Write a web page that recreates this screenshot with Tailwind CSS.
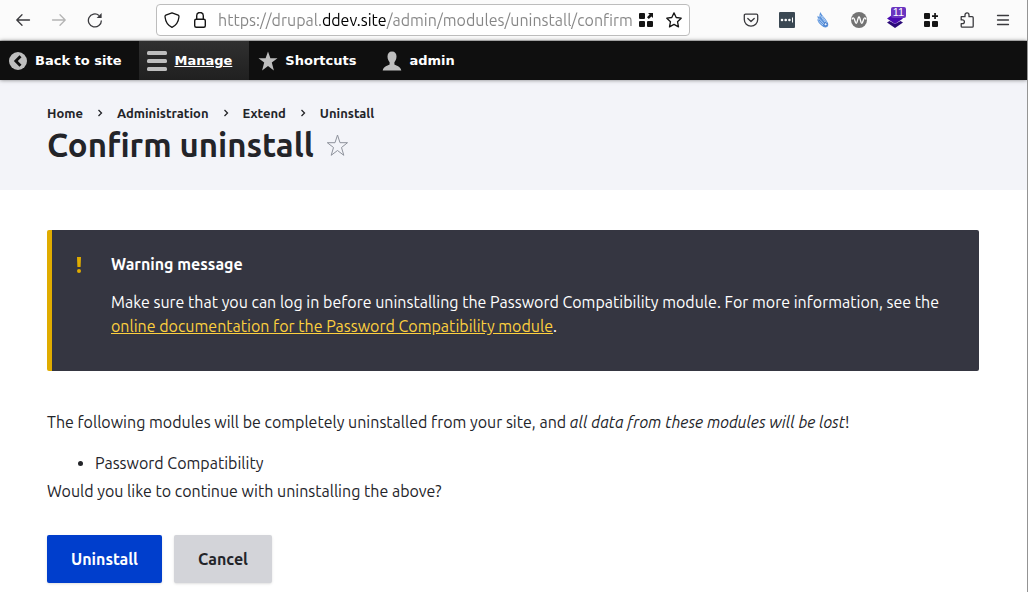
<!DOCTYPE html>
<html lang="en">
<head>
  <meta charset="UTF-8">
  <meta name="viewport" content="width=device-width, initial-scale=1.0">
  <title>Confirm uninstall</title>
  <script src="https://cdn.jsdelivr.net/npm/@tailwindcss/browser@4"></script>
</head>
<body class="min-h-screen border-r border-[#949494] bg-white font-['Ubuntu','Noto_Sans',sans-serif] text-base text-[#232429]">

  <!-- Browser bar -->
  <div class="flex h-[41px] items-center justify-between border-b border-[#cccccc] bg-[#fbfbfb] pl-[15px] pr-4 text-[#3a3a3e]">
    <div class="flex gap-5">
      <button aria-label="Back"><svg class="size-4" viewBox="0 0 16 16" fill="none" stroke="currentColor" stroke-width="1.3" stroke-linecap="round" stroke-linejoin="round"><path d="M14.500 8H2M7 2.800L1.800 8L7 13.200"/></svg></button>
      <button aria-label="Forward" class="text-[#b4b4b4]"><svg class="size-4" viewBox="0 0 16 16" fill="none" stroke="currentColor" stroke-width="1.3" stroke-linecap="round" stroke-linejoin="round"><path d="M1.500 8H14M9 2.800L14.200 8L9 13.200"/></svg></button>
      <button aria-label="Reload"><svg class="size-4" viewBox="0 0 16 16" fill="none" stroke="currentColor" stroke-width="1.3"><path d="M14.400 8.500A6.500 6.500 0 1 1 12 3.400"/><path d="M14.600 1V6H9.600z" fill="currentColor" stroke="none"/></svg></button>
    </div>

    <div class="flex h-8 w-[534px] items-center rounded border border-[#bdbdbd] bg-white px-[7px] text-[#151515]">
      <svg class="size-4 shrink-0" viewBox="0 0 16 16" fill="none" stroke="currentColor" stroke-width="1.3" stroke-linejoin="round"><path d="M8 .8L14.200 3.100Q15.200 3.500 14.900 5.200C14.400 10 12 13.400 8 15.300C4 13.400 1.600 10 1.100 5.200Q.8 3.500 1.800 3.100z"/></svg>
      <svg class="ml-3 size-4 shrink-0" viewBox="0 0 16 16" fill="none" stroke="currentColor" stroke-width="1.4"><rect x="2.700" y="7.200" width="10.600" height="8" rx="1.500"/><path d="M4.700 7V3.800a3.300 3.300 0 0 1 6.600 0V7"/></svg>
      <!-- the gradient darkens the domain part of the address -->
      <input type="text" aria-label="Address" value="https://drupal.ddev.site/admin/modules/uninstall/confirm" class="ml-2.5 min-w-0 flex-1 bg-[linear-gradient(to_right,#858585_104px,#000_104px,#000_168px,#858585_168px)] bg-clip-text text-base text-transparent outline-none">
      <button aria-label="Open in container"><svg class="size-4" viewBox="0 0 16 16" fill="currentColor"><rect x="1" y="1" width="6" height="6" rx="1"/><rect x="1" y="9" width="6" height="6" rx="1"/><rect x="9" y="9" width="6" height="6" rx="1"/><path d="M10 1h5v5l-1.600-1.600-2.600 2.600-1.800-1.800 2.600-2.600z"/></svg></button>
      <button aria-label="Bookmark this page" class="ml-3"><svg class="size-4" viewBox="0 0 16 16" fill="none" stroke="currentColor" stroke-width="1.3" stroke-linejoin="round"><path d="M8 .9L10.200 5.500L15.200 6.200L11.500 9.700L12.500 14.900L8 12.400L3.500 14.900L4.500 9.700L.8 6.200L5.800 5.500z"/></svg></button>
    </div>

    <div class="flex items-center gap-5">
      <button aria-label="Save to Pocket"><svg class="size-4" viewBox="0 0 16 16" fill="none" stroke="currentColor" stroke-width="1.3" stroke-linecap="round" stroke-linejoin="round"><path d="M2.500 2.200H13.500Q14.700 2.200 14.700 3.400V7.500A6.700 6.700 0 0 1 1.300 7.500V3.400Q1.300 2.200 2.500 2.200z"/><path d="M4.800 6.500L8 9.500L11.200 6.500"/></svg></button>
      <button aria-label="Password manager"><svg class="size-4" viewBox="0 0 16 16"><rect width="16" height="16" rx="1" fill="#3b4853"/><g fill="#fff"><circle cx="3" cy="8" r="1.300"/><circle cx="6.700" cy="8" r="1.300"/><circle cx="10.400" cy="8" r="1.300"/><rect x="13" y="5.500" width="1" height="5"/></g></svg></button>
      <button aria-label="Feather"><svg class="size-4" viewBox="0 0 16 16"><path d="M5.500 0C6.500 3 9.500 5.500 11.500 8.500Q14.500 12.500 12.500 14.800Q9.500 16.500 6.500 13.500C4 11.500 2.500 9.500 2.200 7L4 8.500Q2 5.500 2.700 3.800L4.500 5.500Q4 2.500 5.500 0z" fill="#5b93dc"/><path d="M5 3L10 10M3.500 6L9 12M3.500 9L8 13M7 4L12 11" fill="none" stroke="#cfe2fa" stroke-width=".7"/><circle cx="10.600" cy="12.300" r="1.500" fill="#e8f1fd" stroke="#2965bd" stroke-width=".8"/></svg></button>
      <button aria-label="Web archive"><svg class="size-4" viewBox="0 0 16 16"><circle cx="8" cy="8" r="8" fill="#737373"/><path d="M1 7.500Q2.200 4.500 3.300 7L4.500 10.500Q5.200 12 5.900 10.500L7.200 6Q8 4 8.800 6L10.100 10.500Q10.800 12 11.500 10.500L12.700 7Q13.800 4.500 15 7.500" fill="none" stroke="#fff" stroke-width="1.3"/></svg></button>
      <button aria-label="Layers, 11 items" class="relative">
        <svg class="size-4" viewBox="0 0 16 16"><path d="M0 10.500L2.500 9L8 12L13.500 9L16 10.500L8 16z" fill="#2b0a78"/><path d="M0 6.500L8 1L16 6.500L8 12z" fill="#4a0cb0"/></svg>
        <span class="absolute -right-[3px] -top-[5px] h-[11px] w-[15px] rounded-[2px] bg-[#6a35c0] text-center font-['Liberation_Sans',sans-serif] text-[11px] leading-[11px] text-white">11</span>
      </button>
      <button aria-label="Add widget"><svg class="size-4" viewBox="0 0 16 16" fill="#151515"><rect x="1" y="1" width="6" height="6" rx="1"/><rect x="1" y="9" width="6" height="6" rx="1"/><rect x="9" y="9" width="6" height="6" rx="1"/><path d="M11.200 1h1.700v2.200H15v1.700h-2.100V7h-1.700V4.900H9V3.200h2.200z"/></svg></button>
      <button aria-label="Extensions"><svg class="size-4" viewBox="0 0 16 16" fill="none" stroke="currentColor" stroke-width="1.3" stroke-linejoin="round"><path d="M2.200 4.700H6V2.900a2 2 0 0 1 4 0V4.700H13.200Q14.200 4.700 14.200 5.700V14.200Q14.200 15.200 13.200 15.200H3.200Q2.200 15.200 2.200 14.200V11.700H3.500a1.900 1.900 0 0 0 0-3.800H2.200z"/></svg></button>
      <button aria-label="Menu"><svg class="size-4" viewBox="0 0 16 16" fill="none" stroke="currentColor" stroke-width="1.3" stroke-linecap="round"><path d="M2.500 3.500H13.500M2.500 8H13.500M2.500 12.500H13.500"/></svg></button>
    </div>
  </div>

  <!-- Admin toolbar -->
  <nav class="relative flex h-[39px] items-stretch bg-[#0f0f0f] font-['DejaVu_Sans',sans-serif] text-[13px] font-bold text-white shadow-[0_0_4px_rgba(0,0,0,0.5)]">
    <a href="#" class="flex items-center gap-[7px] pl-2 pr-[18px]">
      <svg class="size-5" viewBox="0 0 20 20"><circle cx="10" cy="10" r="9" fill="#bebebe"/><path d="M12.500 5.200L7.800 10L12.500 14.800" fill="none" stroke="#0f0f0f" stroke-width="2.800"/></svg>
      Back to site
    </a>
    <a href="#" class="flex items-center gap-[7px] bg-linear-to-b from-[#303030] to-[#202020] pl-2 pr-[17px]">
      <svg class="size-5" viewBox="0 0 20 20" fill="#bebebe"><rect y="0" width="20" height="4" rx="1.500"/><rect y="8" width="20" height="4" rx="1.500"/><rect y="16" width="20" height="4" rx="1.500"/></svg>
      <span class="underline">Manage</span>
    </a>
    <a href="#" class="flex items-center gap-[7px] pl-[9px] pr-[17px]">
      <svg class="size-5" viewBox="0 0 20 20" fill="#bebebe"><path d="M10 .5L12.400 7.300H19.500L13.800 11.600L15.900 19.500L10 15L4.100 19.500L6.200 11.600L.5 7.300H7.600z"/></svg>
      Shortcuts
    </a>
    <a href="#" class="flex items-center gap-[7px] pl-[9px] pr-[17px]">
      <svg class="size-5" viewBox="0 0 20 20" fill="#bebebe"><path d="M10 .5C13 .5 14.500 2.500 14.500 5.500C14.500 8.500 13.200 10 12.400 11.200V13.200C12.400 14.500 18.800 14.800 19.300 19.500H.7C1.200 14.800 7.600 14.500 7.600 13.200V11.200C6.800 10 5.500 8.500 5.500 5.500C5.500 2.500 7 .5 10 .5z"/></svg>
      admin
    </a>
  </nav>

  <!-- Page header -->
  <header class="bg-[#f3f4f9] px-[47px] py-6">
    <nav aria-label="Breadcrumb">
      <ol class="flex items-center gap-[13px] text-[13px] font-bold leading-[18px]">
        <li><a href="#">Home</a></li>
        <li aria-hidden="true"><svg class="size-2" viewBox="0 0 8 8" fill="none" stroke="currentColor" stroke-width="1.3"><path d="M2.500 1L5.500 4L2.500 7"/></svg></li>
        <li><a href="#">Administration</a></li>
        <li aria-hidden="true"><svg class="size-2" viewBox="0 0 8 8" fill="none" stroke="currentColor" stroke-width="1.3"><path d="M2.500 1L5.500 4L2.500 7"/></svg></li>
        <li><a href="#">Extend</a></li>
        <li aria-hidden="true"><svg class="size-2" viewBox="0 0 8 8" fill="none" stroke="currentColor" stroke-width="1.3"><path d="M2.500 1L5.500 4L2.500 7"/></svg></li>
        <li><a href="#">Uninstall</a></li>
      </ol>
    </nav>
    <div class="mt-0.5 flex items-center gap-3">
      <h1 class="text-[33px] font-bold leading-[42px]">Confirm uninstall</h1>
      <button aria-label="Add to shortcuts"><svg class="size-6" viewBox="0 0 24 24" fill="none" stroke="#8e929c" stroke-width="1"><path d="M11.500 2L14 9.700H21.500L15.500 14.500L17.800 22.300L11.500 17.500L5.200 22.300L7.500 14.500L1.300 9.700H9z"/></svg></button>
    </div>
  </header>

  <main class="pl-[47px] pr-12 pt-10">
    <div role="alert" class="flex rounded-[2px] border-l-[5px] border-[#e0ac00] bg-[#353641] pb-[33px] pl-6 pr-6 pt-[22px] text-white">
      <svg class="mt-[5px] h-4 w-[35px] shrink-0" viewBox="0 0 35 16" fill="#e0ac00"><path d="M1 0h4l-.4 10H1.400z"/><circle cx="3" cy="14" r="2"/></svg>
      <div>
        <h2 class="font-bold leading-6">Warning message</h2>
        <p class="mt-3.5 leading-6">Make sure that you can log in before uninstalling the Password Compatibility module. For more information, see the <a href="#" class="text-[#fdd03e] underline">online documentation for the Password Compatibility module</a>.</p>
      </div>
    </div>

    <form class="pt-[39px]">
      <p class="leading-6">The following modules will be completely uninstalled from your site, and <em>all data from these modules will be lost</em>!</p>
      <ul class="mt-[17px] list-disc pl-12 leading-6">
        <li>Password Compatibility</li>
      </ul>
      <p class="mt-1 leading-6">Would you like to continue with uninstalling the above?</p>
      <div class="mt-8 flex gap-3">
        <button type="submit" class="h-12 rounded-[2px] bg-[#003ecc] px-6 font-bold text-white shadow-sm">Uninstall</button>
        <button type="button" class="h-12 rounded-[2px] bg-[#d3d4d9] px-6 font-bold shadow-sm">Cancel</button>
      </div>
    </form>
  </main>

</body>
</html>
